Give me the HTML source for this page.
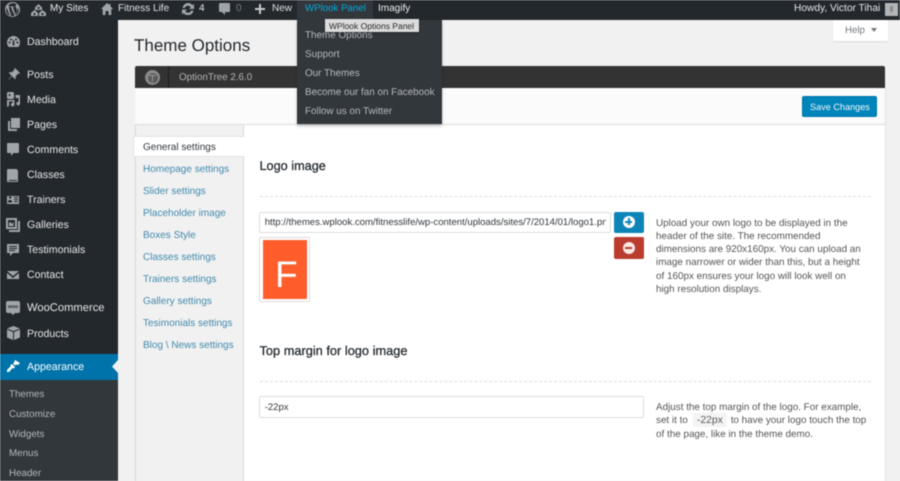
<!DOCTYPE html>
<html><head><meta charset="utf-8"><style>
html,body{margin:0;padding:0}
body{width:900px;height:481px;overflow:hidden;background:#f1f1f1;font-family:"Liberation Sans",sans-serif;position:relative;text-rendering:geometricPrecision}
#w{position:absolute;left:0;top:0;width:900px;height:481px;overflow:hidden;filter:blur(.4px)}
.a{position:absolute;white-space:nowrap}
.t{position:absolute;white-space:nowrap;line-height:14px;height:14px}
.bar{color:#e0e1e2;font-size:10px}
.m{color:#e4e5e6;font-size:10.6px;left:27px}
.s{color:#b4b9be;font-size:9.8px;left:9px}
.dd{color:#b4b9be;font-size:9.9px;left:305px}
.n{color:#2e7ea6;font-size:10px;left:143px;opacity:.9}
.d{color:#555;font-size:9.88px;left:656px}
svg{position:absolute;fill:#a0a5aa}
</style></head><body><div id="w">

<div class="a" style="left:0;top:0;width:900px;height:19.5px;background:#23282d"></div>
<div class="a" style="left:0;top:19.5px;width:117.6px;height:462px;background:#23282d"></div>
<div class="a" style="left:0;top:353.5px;width:117.6px;height:26px;background:#0073aa"></div>
<div class="a" style="left:0;top:379.5px;width:117.6px;height:102px;background:#32373c"></div>
<svg style="left:112px;top:360px;fill:#f1f1f1" width="6" height="13" viewBox="0 0 6 13"><path d="M6 0L0 6.500 6 13z"/></svg>

<!-- admin bar icons -->
<svg style="left:5px;top:2px" width="15" height="15" viewBox="0 0 15 15"><path fill-rule="evenodd" d="M7.500 0a7.500 7.500 0 1 0 0 15 7.500 7.500 0 0 0 0-15zm0 1a6.500 6.500 0 0 1 4.400 1.700c-.8 0-1.400.7-1.400 1.400 0 .7.4 1.200.8 1.900.3.500.6 1.200.6 2.100 0 .6-.2 1.400-.6 2.400l-.7 2.400-2.600-7.800.9-.1c.4 0 .4-.6 0-.6-1.100.1-2.400.1-3.600 0-.4 0-.4.600 0 .6l.8.1 1.100 3.100-1.600 4.700L3.800 4.700l.9-.1c.4 0 .4-.6 0-.6L3 4A6.500 6.500 0 0 1 7.500 1zM1.500 5.500l3.300 8.200A6.500 6.500 0 0 1 1.500 5.500zM7.600 8.200l2 5.500a6.500 6.500 0 0 1-4 .1zm5.400-3a6.500 6.500 0 0 1-2.400 8.500l2-5.800c.4-.9.500-1.700.4-2.700z"/></svg>
<svg style="left:31px;top:3.500px" width="15" height="12" viewBox="0 0 15 12"><path d="M7.500 0L11 3.500v2.500H4V3.500zM3.500 6L7 9v3H0V9zM11.500 6L15 9v3H8V9z"/><path d="M6.500 3h2v2h-2zM2.500 9h2v2h-2zM10.500 9h2v2h-2z" fill="#23282d"/></svg>
<svg style="left:101px;top:3px" width="12" height="12" viewBox="0 0 12 12"><path d="M6 0l2 1.800V1h1.500v2.200L12 6h-1.700v6H7.500V8h-3v4H1.700V6H0z"/></svg>
<svg style="left:181px;top:3px" width="14" height="12" viewBox="0 0 14 12"><path d="M7 0a5.500 5.500 0 0 1 4.500 2.300L13 1v5H8l1.800-1.800A3.400 3.400 0 0 0 3.800 5H1.600A5.500 5.500 0 0 1 7 0zM1 6.500h5L4.200 8.200A3.400 3.400 0 0 0 10.200 7.500h2.200A5.500 5.500 0 0 1 2.500 10L1 11.500z"/></svg>
<svg style="left:219px;top:3px" width="11" height="12" viewBox="0 0 11 12"><path d="M1 0h9a1 1 0 0 1 1 1v7a1 1 0 0 1-1 1H6v3L3 9H1a1 1 0 0 1-1-1V1a1 1 0 0 1 1-1z"/></svg>
<svg style="left:255px;top:4px;fill:#c8cacc" width="10" height="10" viewBox="0 0 10 10"><path d="M4 0h2v4h4v2H6v4H4V6H0V4h4z"/></svg>

<div class="t bar" style="left:50px;top:2px;color:#e8e9ea">My Sites</div>
<div class="t bar" style="left:118px;top:2px">Fitness Life</div>
<div class="t bar" style="left:199px;top:2px">4</div>
<div class="t bar" style="left:236px;top:2px;color:#777c80">0</div>
<div class="t bar" style="left:272px;top:2px">New</div>

<div class="a" style="left:297.300px;top:0;width:75.300px;height:19.500px;background:#32373c"></div>
<div class="t" style="left:305px;top:2px;font-size:9.700px;color:#00acdc">WPlook Panel</div>
<div class="t bar" style="left:378px;top:2px;color:#eee">Imagify</div>
<div class="t" style="left:794px;top:2px;font-size:10.200px;color:#e6e7e8">Howdy, Victor Tihai</div>
<div class="a" style="left:885px;top:3px;width:13px;height:13px;background:#b3b5b6"></div>
<div class="a" style="left:889.500px;top:6px;width:3px;height:6px;background:#8a8c8e"></div>

<!-- side menu -->
<svg style="left:7px;top:36px" width="13" height="11" viewBox="0 0 13 11"><path fill-rule="evenodd" d="M6.500 0A6.500 6.500 0 0 0 0 6.500C0 8 .6 9.700 1.600 11h9.800c1-1.300 1.600-3 1.600-4.500A6.500 6.500 0 0 0 6.500 0zM2.500 5.500a1 1 0 1 1 0 2 1 1 0 0 1 0-2zM4 2.500a1 1 0 1 1 0 2 1 1 0 0 1 0-2zM9 2.500a1 1 0 1 1 0 2 1 1 0 0 1 0-2zM10.500 5.500a1 1 0 1 1 0 2 1 1 0 0 1 0-2zM6 4h1l.5 4.500a1 1 0 1 1-2 0z"/></svg>
<svg style="left:7px;top:68px" width="13" height="13" viewBox="0 0 13 13"><path d="M8 0l5 5-.8.800-.9-.3L8.600 8.200c.5 1.200.2 2.200-.5 3L5.200 8.300 0 13l4.700-5.200L1.800 4.900c.8-.7 1.800-1 3-.5L7.500 1.700l-.3-.9z"/></svg>
<svg style="left:7px;top:92px" width="13" height="15" viewBox="0 0 13 15"><path fill-rule="evenodd" d="M1 0h5l1 1v5l-1 1H1L0 6V1zm1.500 2a1 1 0 1 0 0 2 1 1 0 0 0 0-2zM8.500 3H13v8.500a1.800 1.800 0 1 1-1.500-1.700V6H8.500zM0 8h7.500v4.500a1.800 1.800 0 1 1-1.500-1.700V9.500H2v3.500a1.300 1.300 0 1 1-2-.8z"/></svg>
<svg style="left:8px;top:118px" width="12" height="13" viewBox="0 0 12 13"><path d="M3 0h9v10H3zM0 3h2v8h7v2H0z"/></svg>
<svg style="left:7px;top:143px" width="12" height="13" viewBox="0 0 12 13"><path d="M1 0h10a1 1 0 0 1 1 1v8a1 1 0 0 1-1 1H6.500L4 13v-3H1a1 1 0 0 1-1-1V1a1 1 0 0 1 1-1z"/></svg>
<svg style="left:7px;top:169px" width="12" height="13" viewBox="0 0 12 13"><path d="M0 1a1 1 0 0 1 1-1h9v1h1v12H1a1 1 0 0 1-1-1zM2 11v1h8v-1z"/></svg>
<svg style="left:7px;top:196px" width="12" height="8" viewBox="0 0 12 8"><path fill-rule="evenodd" d="M0 0h12v8H0zM2 1.500a1.200 1.200 0 1 0 2.400 0 1.200 1.200 0 0 0-2.400 0zM1 6.500h4V5L4 4H2L1 5zM7 1v1h4V1zm0 2v1h4V3zm0 2v1h4V5z"/></svg>
<svg style="left:6px;top:218px" width="14" height="14" viewBox="0 0 14 14"><path fill-rule="evenodd" d="M0 0h11v11H0zm2 2v7h7V2zM12 3h2v11H3v-2h9z"/><path d="M3 8V5l1.500-1L6 6l1.500-2v4z"/></svg>
<svg style="left:7px;top:244px" width="12" height="12" viewBox="0 0 12 12"><path fill-rule="evenodd" d="M0 0h12v9H6l-3 3V9H0zm2 2v1h8V2zm0 2v1h8V4zm0 2v1h6V6z"/></svg>
<svg style="left:7px;top:271px" width="12" height="8" viewBox="0 0 12 8"><path d="M0 0h12L6 5zM0 2l6 5 6-5v6H0z"/></svg>
<div class="a" style="left:6px;top:301px;width:14px;height:12px;background:#a0a5aa;border-radius:2px"></div>
<svg style="left:10px;top:312px" width="6" height="3" viewBox="0 0 6 3"><path d="M0 0h6L3 3z"/></svg>
<div class="t" style="left:8px;top:300px;font-size:5px;color:#23282d;font-weight:bold">woo</div>
<svg style="left:7px;top:326px" width="13" height="14" viewBox="0 0 13 14"><path d="M6.500 0L13 2.500 6.500 5 0 2.500zM0 3.500L6 6v8L0 11.500zM13 3.500L7 6v8l6-2.500z"/></svg>
<svg style="left:7px;top:360px;fill:#fff" width="13" height="12" viewBox="0 0 13 12"><path d="M8 0l5 3-2 2-2-.5-1 1-2-2 1-1zM3.500 5L5 4l3 3-1 1.500L5.500 8 2 12H0v-2l3.500-3.500z"/></svg>

<div class="t m" style="top:35px">Dashboard</div>
<div class="t m" style="top:68px">Posts</div>
<div class="t m" style="top:93px">Media</div>
<div class="t m" style="top:118px">Pages</div>
<div class="t m" style="top:143px">Comments</div>
<div class="t m" style="top:168px">Classes</div>
<div class="t m" style="top:193px">Trainers</div>
<div class="t m" style="top:218px">Galleries</div>
<div class="t m" style="top:243px">Testimonials</div>
<div class="t m" style="top:268px">Contact</div>
<div class="t m" style="top:301px;font-size:11.200px">WooCommerce</div>
<div class="t m" style="top:326.500px">Products</div>
<div class="t m" style="top:359.500px;color:#fff">Appearance</div>
<div class="t s" style="top:388px">Themes</div>
<div class="t s" style="top:408px">Customize</div>
<div class="t s" style="top:428px">Widgets</div>
<div class="t s" style="top:447px">Menus</div>
<div class="t s" style="top:467px">Header</div>

<!-- content -->
<div class="t" style="left:134px;top:36.500px;font-size:17px;line-height:18px;height:18px;color:#23282d">Theme Options</div>

<div class="a" style="left:832.700px;top:19.500px;width:55.600px;height:21px;background:#fff;box-shadow:0 1px 1px rgba(0,0,0,.1)"></div>
<div class="t" style="left:845px;top:23.500px;font-size:9.700px;color:#72777c">Help</div>
<svg style="left:870.500px;top:28px;fill:#72777c" width="6" height="4" viewBox="0 0 6 4"><path d="M0 0h6L3 4z"/></svg>

<!-- panel -->
<div class="a" style="left:135px;top:66px;width:750.300px;height:22px;background:#333;border-radius:2px 2px 0 0"></div>
<div class="a" style="left:135.300px;top:88px;width:749.500px;height:36px;background:#fbfbfb;border-bottom:1px solid #ddd"></div>
<div class="a" style="left:168px;top:66px;width:1px;height:22px;background:#1f1f1f"></div>
<div class="a" style="left:145px;top:70px;width:15px;height:15px;border-radius:50%;background:#8b8b8b"></div>
<div class="a" style="left:147.500px;top:72.500px;width:10px;height:10px;border-radius:50%;background:#5a5a5a"></div>
<div class="a" style="left:149px;top:74.500px;width:7px;height:1.500px;background:#9a9a9a"></div>
<div class="a" style="left:151.800px;top:75px;width:1.500px;height:7px;background:#9a9a9a"></div>
<div class="t" style="left:179px;top:71px;font-size:9.800px;color:#b6b6b6">OptionTree 2.6.0</div>

<div class="a" style="left:135px;top:125px;width:109px;height:356px;background:#f1f1f1;border-left:1px solid #d6d6d6;border-right:1px solid #d6d6d6;box-sizing:border-box"></div>
<div class="a" style="left:244px;top:125px;width:640.500px;height:356px;background:#fff"></div>
<div class="a" style="left:884.500px;top:88px;width:1px;height:393px;background:#e2e2e2"></div>

<div class="a" style="left:133.300px;top:135.500px;width:111.200px;height:21px;background:#fff;border:1px solid #e3e3e3;border-right:0;box-sizing:border-box"></div>
<div class="t" style="left:143px;top:140.700px;font-size:10px;color:#32373c">General settings</div>
<div class="t n" style="top:162.700px">Homepage settings</div>
<div class="t n" style="top:184.700px">Slider settings</div>
<div class="t n" style="top:206.700px">Placeholder image</div>
<div class="t n" style="top:228.700px">Boxes Style</div>
<div class="t n" style="top:250.700px">Classes settings</div>
<div class="t n" style="top:272.700px">Trainers settings</div>
<div class="t n" style="top:294.700px">Gallery settings</div>
<div class="t n" style="top:316.700px">Tesimonials settings</div>
<div class="t n" style="top:338.700px">Blog \ News settings</div>

<div class="t" style="left:259.500px;top:158px;font-size:12.700px;line-height:16px;height:16px;color:#23282d;-webkit-text-stroke:.25px #23282d">Logo image</div>
<div class="a" style="left:259.500px;top:196px;width:611px;border-top:1px dashed #ddd"></div>

<div class="a" style="left:259.300px;top:211.500px;width:351.500px;height:21.500px;background:#fff;border:1px solid #ddd;border-radius:2px;box-sizing:border-box"></div>
<div class="t" style="left:264.700px;top:215.500px;font-size:9.550px;color:#32373c;width:341px;overflow:hidden">http://themes.wplook.com/fitnesslife/wp-content/uploads/sites/7/2014/01/logo1.png</div>

<div class="a" style="left:614.300px;top:211.700px;width:29.700px;height:21.700px;background:#0c84b8;border-radius:2px"></div>
<div class="a" style="left:622.700px;top:215.500px;width:12px;height:12px;border-radius:50%;background:#fff"></div>
<div class="a" style="left:625.200px;top:220.500px;width:7px;height:2px;background:#0c84b8"></div>
<div class="a" style="left:627.700px;top:218px;width:2px;height:7px;background:#0c84b8"></div>
<div class="a" style="left:614.300px;top:237.300px;width:29.700px;height:21.700px;background:#b93c2f;border-radius:2px"></div>
<div class="a" style="left:622.700px;top:241.500px;width:12px;height:12px;border-radius:50%;background:#f7e9e6"></div>
<div class="a" style="left:625.200px;top:246.500px;width:7px;height:2px;background:#b93c2f"></div>

<div class="a" style="left:259.300px;top:236.700px;width:51px;height:65.700px;background:#fff;border:1px solid #ddd;border-radius:2px;box-sizing:border-box"></div>
<div class="a" style="left:262.700px;top:240px;width:44.500px;height:59px;background:#ff5e2c"></div>
<div class="t" style="left:275px;top:256.400px;font-size:37px;line-height:37px;height:37px;color:#fff">F</div>

<div class="t d" style="top:216.600px">Upload your own logo to be displayed in the</div>
<div class="t d" style="top:229.700px">header of the site. The recommended</div>
<div class="t d" style="top:242.800px">dimensions are 920x160px. You can upload an</div>
<div class="t d" style="top:256px">image narrower or wider than this, but a height</div>
<div class="t d" style="top:269.500px">of 160px ensures your logo will look well on</div>
<div class="t d" style="top:282.600px">high resolution displays.</div>

<div class="t" style="left:259.500px;top:343px;font-size:12.800px;line-height:16px;height:16px;color:#23282d;-webkit-text-stroke:.25px #23282d">Top margin for logo image</div>
<div class="a" style="left:259.500px;top:381px;width:611px;border-top:1px dashed #ddd"></div>
<div class="a" style="left:259.300px;top:396px;width:384.700px;height:21.500px;background:#fff;border:1px solid #ddd;border-radius:2px;box-sizing:border-box"></div>
<div class="t" style="left:264.700px;top:400.500px;font-size:9.550px;color:#32373c">-22px</div>

<div class="t d" style="top:400.500px">Adjust the top margin of the logo. For example,</div>
<div class="t d" style="top:414px">set it to</div>
<div class="a" style="left:693.300px;top:413.300px;width:33.700px;height:13.500px;background:#f4f4f4"></div>
<div class="t d" style="top:414px;left:697px;font-size:10.300px">-22px</div>
<div class="t d" style="top:414px;left:730.700px">to have your logo touch the top</div>
<div class="t d" style="top:427.500px">of the page, like in the theme demo.</div>

<div class="a" style="left:802px;top:95.700px;width:75px;height:21.600px;background:#0085ba;border:1px solid #0073aa;box-sizing:border-box;border-radius:2px"></div>
<div class="t" style="left:810px;top:99.500px;font-size:9.150px;color:#f2f8fb">Save Changes</div>

<!-- dropdown -->
<div class="a" style="left:297.300px;top:19.500px;width:145px;height:104.800px;background:#32373c;box-shadow:0 2px 3px rgba(0,0,0,.25)"></div>
<div class="t dd" style="top:28.800px">Theme Options</div>
<div class="t dd" style="top:47.800px">Support</div>
<div class="t dd" style="top:66.800px">Our Themes</div>
<div class="t dd" style="top:85.800px">Become our fan on Facebook</div>
<div class="t dd" style="top:104.800px">Follow us on Twitter</div>
<div class="a" style="left:324.700px;top:19.300px;width:94.600px;height:13px;background:#dcdcdc;box-shadow:0 1px 2px rgba(0,0,0,.3)"></div>
<div class="t" style="left:329px;top:18.500px;font-size:8.500px;color:#2a2a2a">WPlook Options Panel</div>
</div></body></html>
